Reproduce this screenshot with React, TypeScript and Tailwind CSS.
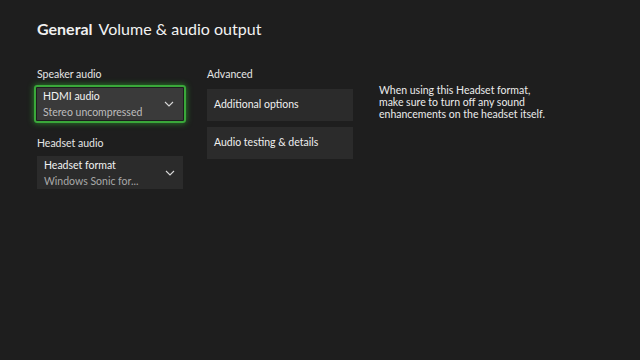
import React from "react";

const Chevron = () => (
  <svg width="10" height="6" viewBox="0 0 10 6" fill="none" className="shrink-0">
    <path d="M1 1l4 4 4-4" stroke="#d8d8d8" strokeWidth="1.1" />
  </svg>
);

const App = () => {
  return (
    <div
      className="w-[640px] h-[360px] bg-[#1e1e1e] text-[#f0f0f0] overflow-hidden"
      style={{ fontFamily: 'Lato, "Noto Sans", sans-serif' }}
    >
      <div className="pl-[37px] pt-[16px]">
        <h1 className="flex items-baseline gap-[6px] text-[16px] leading-[25px]">
          <span className="font-bold">General</span>
          <span className="font-normal text-[#f2f2f2]">Volume &amp; audio output</span>
        </h1>

        <div className="flex mt-[27px]">
          <div className="w-[146px] flex flex-col">
            <div className="text-[10.5px] leading-[12px] text-[#e6e6e6]">Speaker audio</div>
            <div className="mt-[5px] rounded-[3px] border-2 border-[#3aa83a] p-px shadow-[0_0_6px_#2a8a2a] -mx-[3px]">
              <div className="h-[32px] bg-[#3a3a3a] flex items-center justify-between pl-[6px] pr-[9px]">
                <div className="flex flex-col leading-[16px]">
                  <span className="text-[10.5px] text-[#f2f2f2]">HDMI audio</span>
                  <span className="text-[10.5px] text-[#bdbdbd]">Stereo uncompressed</span>
                </div>
                <Chevron />
              </div>
            </div>
            <div className="mt-[14px] text-[10.5px] leading-[12px] text-[#e6e6e6]">Headset audio</div>
            <div className="mt-[7px] h-[33px] bg-[#2b2b2b] flex items-center justify-between pl-[7px] pr-[8px]">
              <div className="flex flex-col leading-[16px]">
                <span className="text-[10.5px] text-[#f2f2f2]">Headset format</span>
                <span className="text-[10.5px] text-[#a8a8a8]">Windows Sonic for...</span>
              </div>
              <Chevron />
            </div>
          </div>

          <div className="ml-[24px] w-[146px] flex flex-col">
            <div className="text-[10.5px] leading-[12px] text-[#e6e6e6]">Advanced</div>
            <div className="mt-[9px] h-[32px] bg-[#2b2b2b] flex items-center pl-[7px] text-[10.5px] text-[#f0f0f0]">
              Additional options
            </div>
            <div className="mt-[6px] h-[32px] bg-[#2b2b2b] flex items-center pl-[7px] text-[10.5px] text-[#f0f0f0]">
              Audio testing &amp; details
            </div>
          </div>

          <div className="ml-[26px] w-[175px] pt-[16px] text-[10.5px] leading-[12px] text-[#ececec]">
            When using this Headset format, make sure to turn off any sound enhancements on the headset itself.
          </div>
        </div>
      </div>
    </div>
  );
};

export default App;
